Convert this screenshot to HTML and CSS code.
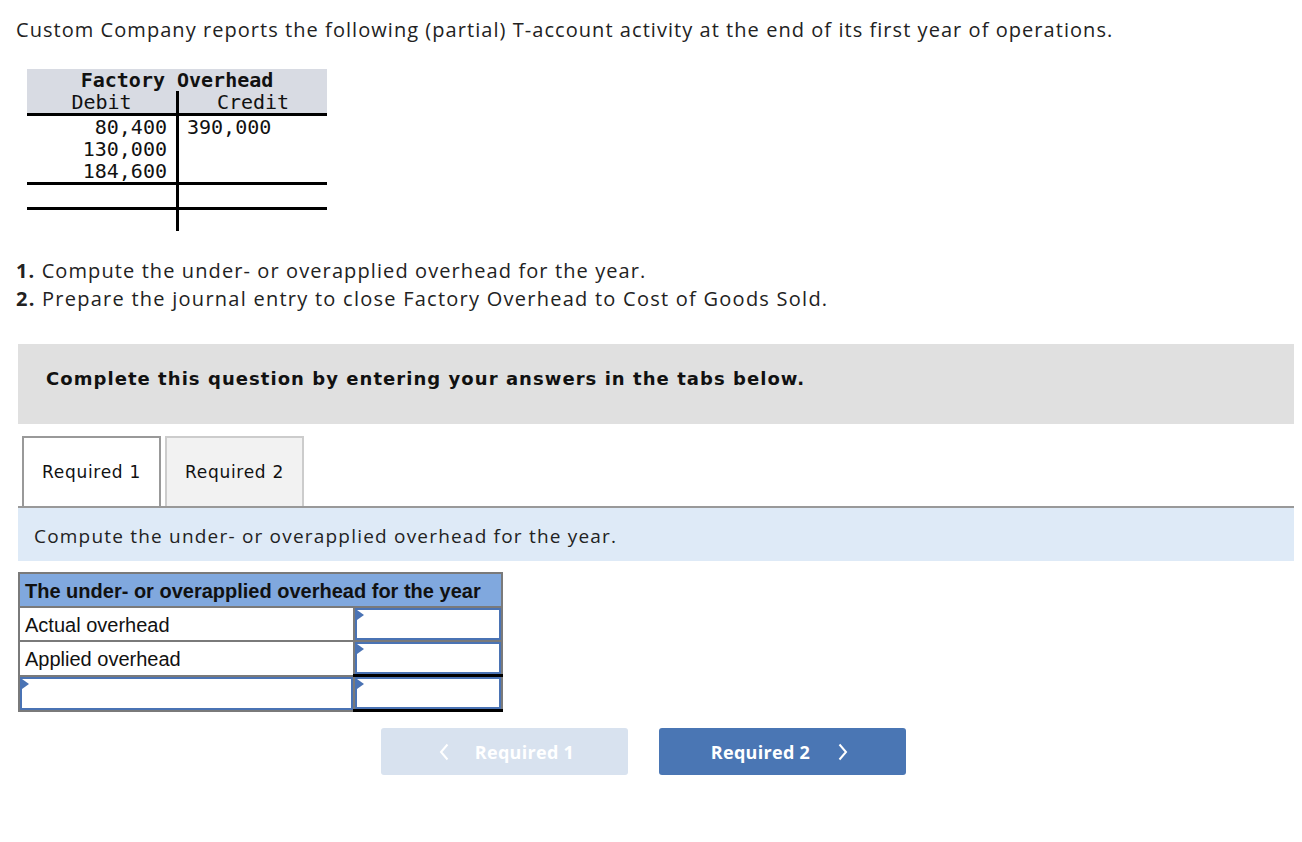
FILE: index.html
```html
<!DOCTYPE html>
<html>
<head>
<meta charset="utf-8">
<link rel="stylesheet" href="styles.css">
</head>
<body>
<div class="page">
  <p class="intro">Custom Company reports the following (partial) T-account activity at the end of its first year of operations.</p>

  <div class="taccount">
    <div class="ta-title">Factory Overhead</div>
    <div class="ta-row ta-head">
      <div class="ta-l ta-c">Debit</div>
      <div class="ta-r ta-c">Credit</div>
    </div>
    <div class="ta-rule"></div>
    <div class="ta-row">
      <div class="ta-l ta-num">80,400<br>130,000<br>184,600</div>
      <div class="ta-r ta-cr">390,000</div>
    </div>
    <div class="ta-rule"></div>
    <div class="ta-row ta-blank">
      <div class="ta-l"></div>
      <div class="ta-r"></div>
    </div>
    <div class="ta-rule"></div>
    <div class="ta-row ta-tail">
      <div class="ta-l"></div>
      <div class="ta-r"></div>
    </div>
  </div>

  <div class="questions">
    <div><b>1.</b> Compute the under- or overapplied overhead for the year.</div>
    <div class="q2"><b>2.</b> Prepare the journal entry to close Factory Overhead to Cost of Goods Sold.</div>
  </div>

  <div class="banner">Complete this question by entering your answers in the tabs below.</div>

  <div class="tabs">
    <div class="tab tab-active">Required 1</div>
    <div class="tab">Required 2</div>
  </div>

  <div class="prompt">Compute the under- or overapplied overhead for the year.</div>

  <table class="grid">
    <tr><th colspan="2">The under- or overapplied overhead for the year</th></tr>
    <tr><td class="lbl">Actual overhead</td><td class="inp"><span class="flag"></span></td></tr>
    <tr><td class="lbl">Applied overhead</td><td class="inp inp-total"><span class="flag"></span></td></tr>
    <tr><td class="lbl inp"><span class="flag"></span></td><td class="inp inp-total"><span class="flag"></span></td></tr>
  </table>

  <div class="nav">
    <div class="btn btn-off">
      <svg class="chev" width="10" height="18" viewBox="0 0 10 18"><path d="M8.5 1.5 L2 9 L8.5 16.5" fill="none" stroke="#fff" stroke-width="2"/></svg>
      <span>Required 1</span>
    </div>
    <div class="btn btn-on">
      <span>Required 2</span>
      <svg class="chev" width="10" height="18" viewBox="0 0 10 18"><path d="M1.5 1.5 L8 9 L1.5 16.5" fill="none" stroke="#fff" stroke-width="2"/></svg>
    </div>
  </div>
</div>
</body>
</html>
```

FILE: styles.css
```css
html, body {
  margin: 0;
  padding: 0;
  background: #fff;
}
.page {
  padding: 16px 8px 40px 18px;
  color: #222;
  font-family: "Open Sans", "Liberation Sans", sans-serif;
}
.intro {
  margin: 0 0 25px -2px;
  font-size: 20px;
  line-height: 28px;
  letter-spacing: 1.05px;
}
.taccount {
  margin-left: 9px;
  width: 300px;
  font-family: "DejaVu Sans Mono", monospace;
  font-size: 20px;
  line-height: 22px;
  color: #111;
}
.ta-title {
  background: #d8dbe3;
  text-align: center;
  font-weight: bold;
  height: 22px;
}
.ta-row {
  display: flex;
}
.ta-head {
  background: #d8dbe3;
}
.ta-l {
  width: 149px;
  flex: none;
  box-sizing: border-box;
}
.ta-r {
  width: 151px;
  flex: none;
  box-sizing: border-box;
  border-left: 3px solid #000;
}
.ta-c {
  text-align: center;
}
.ta-num {
  text-align: right;
  padding-right: 9px;
}
.ta-cr {
  padding-left: 8px;
}
.ta-rule {
  height: 3px;
  background: #000;
}
.ta-blank > div {
  height: 22px;
}
.ta-tail > div {
  height: 21px;
}
.questions {
  margin: 26px 0 31px -2px;
  font-size: 20px;
  line-height: 28px;
  letter-spacing: 1.1px;
}
.q2 {
  letter-spacing: 1.25px;
}
.banner {
  background: #e0e0e0;
  height: 80px;
  box-sizing: border-box;
  padding: 0 0 12px 28px;
  display: flex;
  align-items: center;
  font-family: "DejaVu Sans", Verdana, sans-serif;
  font-weight: bold;
  font-size: 18px;
  letter-spacing: 1.05px;
  color: #111;
}
.tabs {
  display: flex;
  gap: 4px;
  margin-top: 12px;
  padding-left: 4px;
  border-bottom: 2px solid #999;
}
.tab {
  width: 139px;
  height: 70px;
  box-sizing: border-box;
  border: 2px solid #ccc;
  border-bottom: none;
  background: #f2f2f2;
  display: flex;
  align-items: center;
  justify-content: center;
  font-family: "DejaVu Sans", Verdana, sans-serif;
  font-size: 17px;
  letter-spacing: 0.7px;
  color: #111;
}
.tab-active {
  background: #fff;
  border-color: #999;
}
.prompt {
  background: #deeaf7;
  height: 53px;
  box-sizing: border-box;
  display: flex;
  align-items: center;
  padding: 2px 0 0 16px;
  font-size: 19px;
  letter-spacing: 1.2px;
  color: #222;
}
.grid {
  margin-top: 11px;
  border-collapse: collapse;
  font-family: "Liberation Sans", Arial, sans-serif;
  font-size: 20px;
  line-height: 23px;
  color: #111;
}
.grid th {
  background: #80a8de;
  border: 2px solid #7a7a7a;
  text-align: left;
  height: 30px;
  padding: 2px 5px 0;
  font-weight: bold;
}
.grid td {
  border: 2px solid #7a7a7a;
  height: 30px;
  padding: 2px 0 0;
}
.grid td.lbl {
  width: 328px;
  padding-left: 5px;
}
.grid td.inp {
  position: relative;
  width: 146px;
  box-shadow: inset 0 0 0 2px #4a73b4;
}
.grid td.lbl.inp {
  width: 328px;
  padding-left: 0;
}
.grid td.inp-total {
  border-bottom: 3px solid #000;
}
.flag {
  position: absolute;
  left: 2px;
  top: 2px;
  width: 0;
  height: 0;
  border-top: 5px solid transparent;
  border-bottom: 5px solid transparent;
  border-left: 7px solid #4a73b4;
}
.nav {
  display: flex;
  gap: 31px;
  margin-top: 16px;
  margin-left: 363px;
}
.btn {
  width: 247px;
  height: 47px;
  box-sizing: border-box;
  border-radius: 3px;
  display: flex;
  align-items: center;
  justify-content: center;
  color: #fff;
  font-weight: bold;
  font-size: 18px;
  letter-spacing: 0.3px;
}
.btn-off {
  background: #d8e2ef;
  gap: 26px;
  padding-left: 4px;
}
.btn-on {
  background: #4a76b4;
  gap: 28px;
  padding-right: 6px;
}
.chev {
  display: block;
}
```
